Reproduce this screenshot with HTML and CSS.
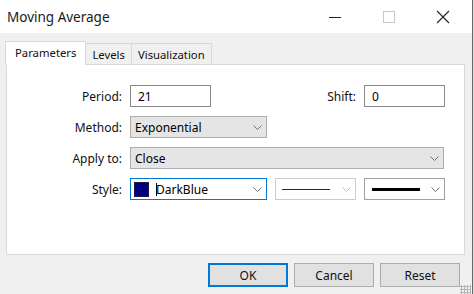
FILE: index.html
```html
<!DOCTYPE html>
<html lang="en">
<head>
    <meta charset="UTF-8">
    <meta name="viewport" content="width=device-width, initial-scale=1.0">
    <title>Moving Average</title>
    <link rel="stylesheet" href="styles.css">
</head>
<body>
    <div class="window">
        <div class="titlebar">
            <span class="title">Moving Average</span>
            <div class="caption">
                <span class="cap-btn">
                    <svg width="12" height="12" viewBox="0 0 12 12"><line x1="0" y1="6.5" x2="12" y2="6.5" stroke="#222" stroke-width="1"/></svg>
                </span>
                <span class="cap-btn">
                    <svg width="12" height="12" viewBox="0 0 12 12"><rect x="0.5" y="0.5" width="11" height="11" fill="none" stroke="#c8c8c8" stroke-width="1"/></svg>
                </span>
                <span class="cap-btn">
                    <svg width="14" height="14" viewBox="0 0 14 14"><path d="M1 1 L13 13 M13 1 L1 13" stroke="#222" stroke-width="1.1"/></svg>
                </span>
            </div>
        </div>

        <div class="client">
            <div class="tabs">
                <div class="tab active">Parameters</div>
                <div class="tab">Levels</div>
                <div class="tab">Visualization</div>
            </div>

            <div class="panel">
                <div class="form">
                    <label class="lbl">Period:</label>
                    <div class="field short"><span>21</span></div>
                    <label class="lbl">Shift:</label>
                    <div class="field"><span>0</span></div>

                    <label class="lbl">Method:</label>
                    <div class="combo">
                        <span>Exponential</span>
                        <svg class="chev" width="9" height="5" viewBox="0 0 9 5"><polyline points="0.5,0.5 4.5,4.5 8.5,0.5" fill="none" stroke="#6e6e6e"/></svg>
                    </div>
                    <span></span>
                    <span></span>

                    <label class="lbl">Apply to:</label>
                    <div class="combo wide">
                        <span>Close</span>
                        <svg class="chev" width="9" height="5" viewBox="0 0 9 5"><polyline points="0.5,0.5 4.5,4.5 8.5,0.5" fill="none" stroke="#6e6e6e"/></svg>
                    </div>

                    <label class="lbl">Style:</label>
                    <div class="combo color-combo">
                        <span class="swatch"></span>
                        <span class="caret"></span>
                        <span>DarkBlue</span>
                        <svg class="chev" width="9" height="5" viewBox="0 0 9 5"><polyline points="0.5,0.5 4.5,4.5 8.5,0.5" fill="none" stroke="#6e6e6e"/></svg>
                    </div>
                    <div class="combo line-combo disabled">
                        <span class="line thin"></span>
                        <svg class="chev" width="9" height="5" viewBox="0 0 9 5"><polyline points="0.5,0.5 4.5,4.5 8.5,0.5" fill="none" stroke="#c4c4c4"/></svg>
                    </div>
                    <div class="combo line-combo">
                        <span class="line thick"></span>
                        <svg class="chev" width="9" height="5" viewBox="0 0 9 5"><polyline points="0.5,0.5 4.5,4.5 8.5,0.5" fill="none" stroke="#6e6e6e"/></svg>
                    </div>
                </div>
            </div>

            <div class="buttons">
                <button class="btn default">OK</button>
                <button class="btn">Cancel</button>
                <button class="btn">Reset</button>
            </div>
            <div class="grip"></div>
        </div>
    </div>
</body>
</html>
```

FILE: styles.css
```css
body {
    margin: 0;
    background: #d8d8d8;
    font-family: "Noto Sans", "Open Sans", sans-serif;
    font-size: 12px;
    color: #000;
}
.window {
    width: 472px;
    height: 294px;
    border-right: 1px solid #6a6a6a;
    background: #f0f0f0;
    overflow: hidden;
}
.titlebar {
    height: 33px;
    background: #fff;
    display: flex;
    align-items: center;
    justify-content: space-between;
}
.title {
    padding-left: 7px;
    font-size: 13.5px;
    color: #1a1a1a;
}
.caption {
    display: flex;
    padding-right: 2px;
}
.cap-btn {
    width: 54px;
    height: 33px;
    display: flex;
    align-items: center;
    justify-content: center;
}
.client {
    position: relative;
    height: 261px;
    padding-left: 6px;
}
.tabs {
    display: flex;
    align-items: flex-end;
    height: 23px;
    padding-top: 8px;
    font-size: 11.3px;
}
.tab {
    height: 20px;
    line-height: 22px;
    padding: 0 6px;
    border: 1px solid #d9d9d9;
    border-bottom: none;
    background: #f0f0f0;
    color: #111;
}
.tab + .tab {
    border-left: none;
}
.tab.active {
    position: relative;
    z-index: 1;
    height: 23px;
    line-height: 21px;
    margin-left: -1px;
    margin-bottom: -1px;
    padding: 0 9px;
    background: #fff;
    border-right: 1px solid #d9d9d9;
}
.panel {
    width: 457px;
    height: 189px;
    background: #fff;
    border: 1px solid #d9d9d9;
}
.form {
    display: grid;
    grid-template-columns: 115px 137px 81px 81px;
    grid-auto-rows: 22px;
    column-gap: 8px;
    row-gap: 9px;
    padding-top: 20px;
}
.lbl {
    display: flex;
    align-items: center;
    justify-content: flex-end;
    color: #111;
}
.field {
    box-sizing: border-box;
    height: 22px;
    width: 81px;
    border: 1px solid #8a8a8a;
    background: #fff;
    display: flex;
    align-items: center;
    padding-left: 7px;
}
.combo {
    box-sizing: border-box;
    height: 22px;
    border: 1px solid #adadad;
    background: #e5e5e5;
    display: flex;
    align-items: center;
    padding-left: 4px;
    padding-right: 4px;
}
.combo span:first-child {
    flex: 0 0 auto;
}
.combo .chev {
    margin-left: auto;
}
.combo.wide {
    grid-column: 2 / span 3;
    margin-right: 1px;
}
.color-combo {
    background: #fff;
    border-color: #0078d7;
    padding-left: 3px;
}
.swatch {
    width: 13px;
    height: 13px;
    background: #000080;
    border: 1px solid #1b1b50;
    margin-right: 7px;
}
.caret {
    width: 1px;
    height: 13px;
    background: #000;
    margin-right: -1px;
}
.line-combo {
    background: #fff;
    border-color: #a0a0a0;
    padding-left: 6px;
}
.line-combo.disabled {
    border-color: #cccccc;
}
.line {
    display: block;
    width: 48px;
}
.line.thin {
    height: 1px;
    background: #2a2a2a;
}
.line.thick {
    height: 3px;
    background: #000;
    margin-left: 1px;
}
.buttons {
    display: flex;
    justify-content: flex-end;
    gap: 6px;
    margin-top: 8px;
    padding-right: 12px;
}
.btn {
    box-sizing: border-box;
    width: 80px;
    height: 24px;
    border: 1px solid #adadad;
    background: #e1e1e1;
    font-family: "Noto Sans", "Open Sans", sans-serif;
    font-size: 12px;
    color: #111;
    padding: 0;
}
.btn.default {
    border: 2px solid #0078d7;
}
.grip {
    position: absolute;
    right: 1px;
    bottom: 0;
    width: 11px;
    height: 9px;
    background-image: radial-gradient(circle, #b5b5b5 1px, transparent 1.2px);
    background-size: 3px 3px;
}
```
